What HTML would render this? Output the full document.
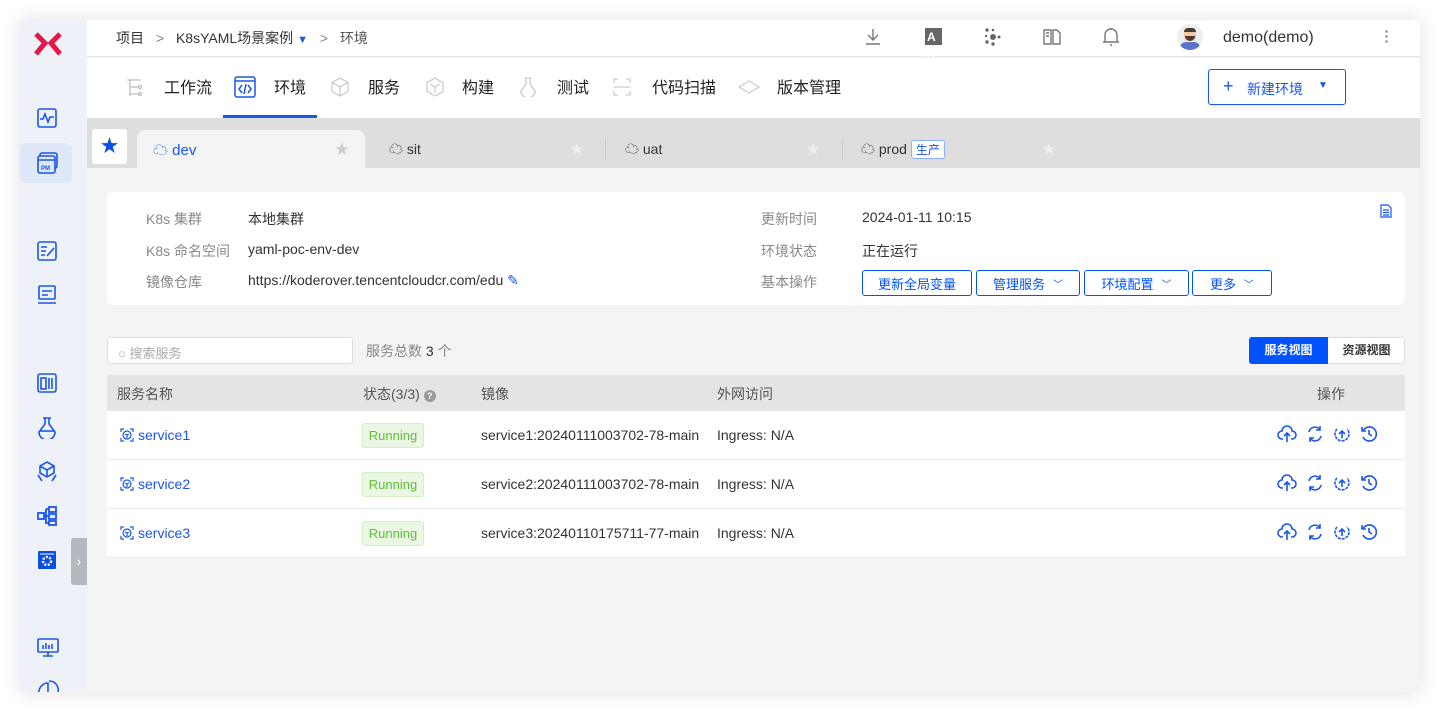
<!DOCTYPE html>
<html><head><meta charset="utf-8"><style>
*{box-sizing:border-box;margin:0;padding:0}
body{width:1440px;height:712px;background:#fff;font-family:"Liberation Sans","Noto Sans CJK SC",sans-serif;position:relative;overflow:hidden;color:#333}
.app{position:absolute;left:20px;top:20px;width:1400px;height:672px;background:#f4f4f4;box-shadow:0 0 18px rgba(0,0,0,.12);overflow:hidden}
.side{position:absolute;left:0;top:0;width:67px;height:672px;background:#eef2f8}
.side svg{position:absolute;left:17px}
.abs{position:absolute}
.hdr{position:absolute;left:67px;top:0;width:1333px;height:37px;background:#fff;border-bottom:1px solid #e6e6e6;font-size:14px}
.nav{position:absolute;left:67px;top:38px;width:1333px;height:60px;background:#fff;font-size:16px;color:#222}
.tabs{position:absolute;left:67px;top:98px;width:1333px;height:50px;background:#dedede}
.tab{position:absolute;top:12px;height:38px;font-size:14px;color:#333;display:flex;align-items:center}
.card{position:absolute;left:87px;top:172px;width:1298px;height:113px;background:#fff;border-radius:6px;font-size:14px}
.lbl{position:absolute;color:#888}
.val{position:absolute;color:#333}
.btn{position:absolute;top:78px;height:26px;border:1px solid #0052ff;border-radius:3px;color:#0052ff;font-size:13px;display:flex;align-items:center;justify-content:center;gap:8px}
.th{position:absolute;left:87px;top:355px;width:1298px;height:36px;background:#e4e4e4;font-size:14px;color:#555}
.row{position:absolute;left:87px;width:1298px;height:49px;background:#fff;border-bottom:1px solid #e9ebf0;font-size:14px;color:#333}
.row>span{position:absolute;top:16px}
.run{position:absolute;left:255px;top:12px;width:62px;height:25px;background:#eaf7e3;border:1px solid #d4efc5;border-radius:3px;color:#5fbe3a;font-size:13px;text-align:center;line-height:23px}
.ops{position:absolute;left:1170px;top:14px}
.ops svg{margin-right:9px}
.si{vertical-align:-2px;margin-right:4px}
</style></head><body>
<div class="app">
<div class="side">
 <svg style="top:12px;left:14px" width="28" height="24" viewBox="0 0 28 24"><path d="M2 2 L11 11 L2 22 M26 2 L17 11 L26 22" stroke="#e8174a" stroke-width="5" fill="none"/></svg>
 <svg style="top:88px" width="20" height="20" viewBox="0 0 20 20" fill="none" stroke="#1a56e8" stroke-width="1.6"><rect x="1" y="1" width="18" height="18" rx="2"/><path d="M3 11h3l2-5 3 8 2-5h4"/></svg>
 <div class="abs" style="left:0;top:123px;width:52px;height:40px;background:#dfe8f8;border-radius:6px"></div>
 <svg style="top:132px" width="22" height="22" viewBox="0 0 22 22" fill="none" stroke="#1a56e8" stroke-width="1.6"><rect x="3" y="1" width="17" height="15" rx="2"/><rect x="1" y="4" width="17" height="17" rx="2" fill="#dfe8f8"/><path d="M1 8h17"/><text x="4" y="18" font-size="6" fill="#1a56e8" stroke="none" font-family="Liberation Sans" font-weight="bold">PM</text></svg>
 <svg style="top:221px" width="20" height="20" viewBox="0 0 20 20" fill="none" stroke="#1a56e8" stroke-width="1.6"><rect x="1" y="1" width="18" height="18" rx="2"/><path d="M4 6h6M4 10h5M4 14h4M10 15l7-8"/></svg>
 <svg style="top:265px" width="20" height="20" viewBox="0 0 20 20" fill="none" stroke="#1a56e8" stroke-width="1.6"><rect x="2" y="1" width="16" height="13" rx="1"/><path d="M5 6h10M5 10h6M1 18h18"/></svg>
 <svg style="top:353px" width="20" height="20" viewBox="0 0 20 20" fill="none" stroke="#1a56e8" stroke-width="1.6"><rect x="1" y="1" width="18" height="18" rx="2"/><rect x="4" y="5" width="5" height="11"/><path d="M12 5v11M15 5v11"/></svg>
 <svg style="top:397px" width="20" height="22" viewBox="0 0 20 22" fill="none" stroke="#1a56e8" stroke-width="1.6"><path d="M6 1h8M8 1v6L2 15a6 6 0 0 0 16 0L12 7V1"/><path d="M3 14h14"/></svg>
 <svg style="top:441px" width="20" height="22" viewBox="0 0 20 22" fill="none" stroke="#1a56e8" stroke-width="1.6"><path d="M10 1l7 4v7l-7 4-7-4V5z M3 5l7 4 7-4 M10 9v7"/><path d="M1 14l4 6M19 14l-4 6"/></svg>
 <svg style="top:486px" width="20" height="20" viewBox="0 0 20 20" fill="none" stroke="#1a56e8" stroke-width="1.8"><rect x="1" y="7" width="6" height="6"/><rect x="12" y="1" width="7" height="5"/><rect x="12" y="8" width="7" height="5"/><rect x="12" y="15" width="7" height="4"/><path d="M7 10h5M9 3v14h3M9 3h3"/></svg>
 <svg style="top:530px" width="20" height="20" viewBox="0 0 20 20"><rect x="1" y="1" width="18" height="18" rx="1" fill="#0a4ee8"/><circle cx="10" cy="11" r="4" fill="none" stroke="#fff" stroke-width="2.4" stroke-dasharray="2 1.5"/><circle cx="10" cy="11" r="1.5" fill="#0a4ee8"/><path d="M3 4h14" stroke="#fff"/></svg>
 <div class="abs" style="left:51px;top:518px;width:16px;height:47px;background:#b5b8bf;border-radius:3px 0 0 3px;color:#fff;font-size:14px;text-align:center;line-height:47px">›</div>
 <svg style="top:618px" width="22" height="20" viewBox="0 0 22 20" fill="none" stroke="#1a56e8" stroke-width="1.6"><rect x="1" y="1" width="20" height="13" rx="1"/><path d="M6 11V7M9 11V5M12 11V7M15 11V6M11 14v4M6 18h10"/></svg>
 <svg style="top:660px" width="22" height="12" viewBox="0 0 22 12" fill="none" stroke="#1a56e8" stroke-width="1.6"><path d="M2 12a9 9 0 0 1 9-9v9M12 1a9 9 0 0 1 9 11"/></svg>
</div>
<div class="hdr">
 <div class="abs" style="left:29px;top:8px;color:#333">项目 <span style="color:#888;margin:0 8px">&gt;</span> K8sYAML场景案例 <span style="color:#1a56e8;font-size:11px">▼</span> <span style="color:#888;margin:0 8px">&gt;</span> <span style="color:#555">环境</span></div>
 <svg class="abs" style="left:778px;top:8px" width="16" height="18" viewBox="0 0 16 18" fill="none" stroke="#777" stroke-width="1.4"><path d="M8 1v11M3 7l5 5 5-5M1 16h14"/></svg>
 <div class="abs" style="left:838px;top:8px;width:17px;height:17px;background:#666;color:#fff;font-size:12px;font-weight:bold;line-height:18px;padding-left:2px">A<span style="font-size:7px;vertical-align:top">文</span></div>
 <svg class="abs" style="left:897px;top:8px" width="18" height="18" viewBox="0 0 18 18" fill="#666"><circle cx="9" cy="9" r="3"/><circle cx="3" cy="2" r="1.7"/><circle cx="9" cy="2" r="1.3"/><circle cx="3" cy="14" r="1.7"/><circle cx="15" cy="9" r="1.5"/><circle cx="9" cy="16" r="1.7"/><circle cx="2" cy="8" r="1.2"/></svg>
 <svg class="abs" style="left:956px;top:8px" width="18" height="17" viewBox="0 0 18 17" fill="none" stroke="#777" stroke-width="1.4"><path d="M1 2h7v14H1zM10 2h4l3 3v11h-7zM3 5h3M3 8h3"/></svg>
 <svg class="abs" style="left:1015px;top:7px" width="18" height="20" viewBox="0 0 18 20" fill="none" stroke="#777" stroke-width="1.4"><path d="M3 15V8a6 6 0 0 1 12 0v7M1 15h16M9 1v1M8 18h2"/></svg>
 <div class="abs" style="left:1090px;top:4px;width:26px;height:26px;border-radius:50%;background:#eceef3;overflow:hidden"><div style="position:absolute;left:7px;top:4px;width:12px;height:13px;background:#f2c9a0;border-radius:4px;border-top:4px solid #4a3a30"></div><div style="position:absolute;left:8px;top:12px;width:10px;height:5px;background:#4a3a30;border-radius:0 0 5px 5px"></div><div style="position:absolute;left:3px;top:18px;width:20px;height:10px;background:#5a73c7;border-radius:6px 6px 0 0"></div></div>
 <div class="abs" style="left:1136px;top:9px;font-size:16px;color:#333">demo(demo)</div>
 <div class="abs" style="left:1298px;top:9px;width:3px;height:14px;background:radial-gradient(circle,#999 1.2px,transparent 1.4px) 0 0/3px 5px"></div>
</div>
<div class="nav">
 <svg class="abs" style="left:39px;top:20px" width="18" height="20" viewBox="0 0 18 20" fill="none" stroke="#bbb" stroke-width="1.2"><path d="M1 2h14M4 2v16M4 9h8M4 16h8"/><circle cx="14" cy="9" r="1.5"/><circle cx="14" cy="16" r="1.5"/></svg>
 <div class="abs" style="left:77px;top:16px">工作流</div>
 <svg class="abs" style="left:147px;top:18px" width="22" height="22" viewBox="0 0 22 22" fill="none" stroke="#1a56e8" stroke-width="1.5"><rect x="1" y="1" width="20" height="20" rx="2"/><path d="M1 5h20M8 9l-3 4 3 4M14 9l3 4-3 4M12 8l-2 10"/></svg>
 <div class="abs" style="left:187px;top:16px">环境</div>
 <div class="abs" style="left:136px;top:57px;width:94px;height:3px;background:#1a56e8"></div>
 <svg class="abs" style="left:243px;top:19px" width="20" height="20" viewBox="0 0 20 20" fill="none" stroke="#ccc" stroke-width="1.3"><path d="M10 1l8 4.5v9L10 19 2 14.5v-9z M2 5.5l8 4.5 8-4.5M10 10v9"/></svg>
 <div class="abs" style="left:281px;top:16px">服务</div>
 <svg class="abs" style="left:338px;top:19px" width="20" height="20" viewBox="0 0 20 20" fill="none" stroke="#ccc" stroke-width="1.3"><path d="M10 1l8 4.5v9L10 19 2 14.5v-9z M5 7l5 3 5-3M10 10v6"/></svg>
 <div class="abs" style="left:375px;top:16px">构建</div>
 <svg class="abs" style="left:432px;top:19px" width="18" height="20" viewBox="0 0 18 20" fill="none" stroke="#ccc" stroke-width="1.3"><path d="M6 1h6M7 1v6L2 14a5 5 0 0 0 14 0L11 7V1"/></svg>
 <div class="abs" style="left:470px;top:16px">测试</div>
 <svg class="abs" style="left:526px;top:20px" width="18" height="18" viewBox="0 0 18 18" fill="none" stroke="#ccc" stroke-width="1.3"><path d="M1 5V1h4M13 1h4v4M17 13v4h-4M5 17H1v-4M1 9h16"/></svg>
 <div class="abs" style="left:565px;top:16px">代码扫描</div>
 <svg class="abs" style="left:651px;top:22px" width="22" height="14" viewBox="0 0 22 14" fill="none" stroke="#ccc" stroke-width="1.3"><path d="M1 7l10-6 10 6-10 6z"/></svg>
 <div class="abs" style="left:690px;top:16px">版本管理</div>
 <div class="abs" style="left:1121px;top:11px;width:138px;height:36px;border:1px solid #1a56e8;border-radius:3px;color:#1a56e8;font-size:14px;box-shadow:0 2px 4px rgba(0,0,0,.08)"><span style="position:absolute;left:14px;top:6px;font-size:18px;line-height:20px">+</span><span style="position:absolute;left:38px;top:9px">新建环境</span><span style="position:absolute;left:109px;top:10px;font-size:10px">▼</span></div>
</div>
<div class="tabs">
 <div class="abs" style="left:5px;top:11px;width:35px;height:35px;background:#fff;border-radius:3px;color:#0a4ee8;font-size:18px;text-align:center;line-height:34px">★</div>
 <div class="abs" style="left:50px;top:12px;width:228px;height:38px;background:#f4f4f4;border-radius:8px 8px 0 0"></div>
 <div class="tab" style="left:66px;color:#1a56e8;font-size:15px">☁ dev</div>
 <div class="tab" style="left:248px;color:#ccc">★</div>
 <div class="tab" style="left:302px">☁ sit</div><div class="tab" style="left:483px;color:#f0f0f0">★</div>
 <div class="abs" style="left:518px;top:20px;width:1px;height:22px;background:#ccc"></div>
 <div class="tab" style="left:538px">☁ uat</div><div class="tab" style="left:719px;color:#f0f0f0">★</div>
 <div class="abs" style="left:755px;top:20px;width:1px;height:22px;background:#ccc"></div>
 <div class="tab" style="left:774px">☁ prod <span style="margin-left:4px;border:1px solid #8ab0ff;background:#fff;color:#1a56e8;font-size:12px;padding:0 4px;border-radius:3px">生产</span></div><div class="tab" style="left:955px;color:#f0f0f0">★</div>
</div>
<div class="card">
 <div class="lbl" style="left:39px;top:17px">K8s 集群</div><div class="val" style="left:141px;top:17px">本地集群</div>
 <div class="lbl" style="left:39px;top:49px">K8s 命名空间</div><div class="val" style="left:141px;top:49px">yaml-poc-env-dev</div>
 <div class="lbl" style="left:39px;top:80px">镜像仓库</div><div class="val" style="left:141px;top:80px">https://koderover.tencentcloudcr.com/edu <span style="color:#1a56e8">✎</span></div>
 <div class="lbl" style="left:654px;top:17px">更新时间</div><div class="val" style="left:755px;top:17px">2024-01-11 10:15</div>
 <div class="lbl" style="left:654px;top:49px">环境状态</div><div class="val" style="left:755px;top:49px">正在运行</div>
 <div class="lbl" style="left:654px;top:80px">基本操作</div>
 <div class="btn" style="left:755px;width:110px">更新全局变量</div>
 <div class="btn" style="left:869px;width:104px">管理服务 <span style="font-size:10px">﹀</span></div>
 <div class="btn" style="left:977px;width:105px">环境配置 <span style="font-size:10px">﹀</span></div>
 <div class="btn" style="left:1085px;width:80px">更多 <span style="font-size:10px">﹀</span></div>
 <svg class="abs" style="left:1273px;top:12px" width="12" height="14" viewBox="0 0 12 14" fill="none" stroke="#1a56e8" stroke-width="1.2"><path d="M1 1h7l3 3v9H1zM3 6h6M3 8.5h6M3 11h6"/></svg>
</div>
<div class="abs" style="left:87px;top:317px;width:246px;height:27px;background:#fff;border:1px solid #ddd;border-radius:3px;font-size:13px;color:#aaa;padding:5px 0 0 10px">○ 搜索服务</div>
<div class="abs" style="left:346px;top:321px;font-size:14px;color:#888">服务总数 <span style="color:#333">3</span> 个</div>
<div class="abs" style="left:1229px;top:317px;width:156px;height:27px;border:1px solid #ddd;border-radius:3px;background:#fff;font-size:12px;font-weight:bold">
 <div style="position:absolute;left:-1px;top:-1px;width:79px;height:27px;background:#0052ff;color:#fff;border-radius:3px 0 0 3px;text-align:center;line-height:27px">服务视图</div>
 <div style="position:absolute;left:78px;top:0;width:77px;text-align:center;line-height:25px;color:#333">资源视图</div>
</div>
<div class="th">
 <span class="abs" style="left:10px;top:9px">服务名称</span>
 <span class="abs" style="left:256px;top:9px">状态(3/3) <span style="display:inline-block;width:12px;height:12px;border-radius:50%;background:#999;color:#fff;font-size:9px;text-align:center;line-height:12px;font-weight:bold">?</span></span>
 <span class="abs" style="left:374px;top:9px">镜像</span>
 <span class="abs" style="left:610px;top:9px">外网访问</span>
 <span class="abs" style="left:1210px;top:9px">操作</span>
</div>
<div class="row" style="top:391px"><span style="left:13px;color:#1a56e8" class="sn">service1</span><div class="run">Running</div><span style="left:374px">service1:20240111003702-78-main</span><span style="left:610px">Ingress: N/A</span><div class="ops"></div></div>
<div class="row" style="top:440px"><span style="left:13px;color:#1a56e8" class="sn">service2</span><div class="run">Running</div><span style="left:374px">service2:20240111003702-78-main</span><span style="left:610px">Ingress: N/A</span><div class="ops"></div></div>
<div class="row" style="top:489px"><span style="left:13px;color:#1a56e8" class="sn">service3</span><div class="run">Running</div><span style="left:374px">service3:20240110175711-77-main</span><span style="left:610px">Ingress: N/A</span><div class="ops"></div></div>
</div>
<script>
var s='<svg width="20" height="18" viewBox="0 0 20 18" fill="none" stroke="#1a56e8" stroke-width="1.6"><path d="M6 14H5a4 4 0 0 1 0-8 5 5 0 0 1 10 0 4 4 0 0 1 0 8h-1M10 17V8M7 11l3-3 3 3"/></svg><svg width="18" height="18" viewBox="0 0 18 18" fill="none" stroke="#1a56e8" stroke-width="1.6"><path d="M3 7a6 6 0 0 1 11-2M15 11a6 6 0 0 1-11 2M14 1v4h-4M4 17v-4h4"/></svg><svg width="18" height="18" viewBox="0 0 18 18" fill="none" stroke="#1a56e8" stroke-width="1.6"><path d="M4 4a7 7 0 1 0 10 0" stroke-dasharray="3 1"/><path d="M9 13V6M6 9l3-3 3 3"/></svg><svg width="18" height="18" viewBox="0 0 18 18" fill="none" stroke="#1a56e8" stroke-width="1.6"><path d="M3 6a7 7 0 1 1 0 6M2 2v4h4M9 5v4l3 2"/></svg>';
document.querySelectorAll('.ops').forEach(function(e){e.innerHTML=s});
var ic='<svg class="si" width="14" height="14" viewBox="0 0 14 14" fill="none" stroke="#1a56e8" stroke-width="1.2"><path d="M1 4V1h3M10 1h3v3M13 10v3h-3M4 13H1v-3"/><circle cx="7" cy="7" r="4"/><path d="M5 6l2 1 2-1M7 7v3"/></svg>';
document.querySelectorAll('.sn').forEach(function(e){e.innerHTML=ic+e.textContent});
</script>
</body></html>
